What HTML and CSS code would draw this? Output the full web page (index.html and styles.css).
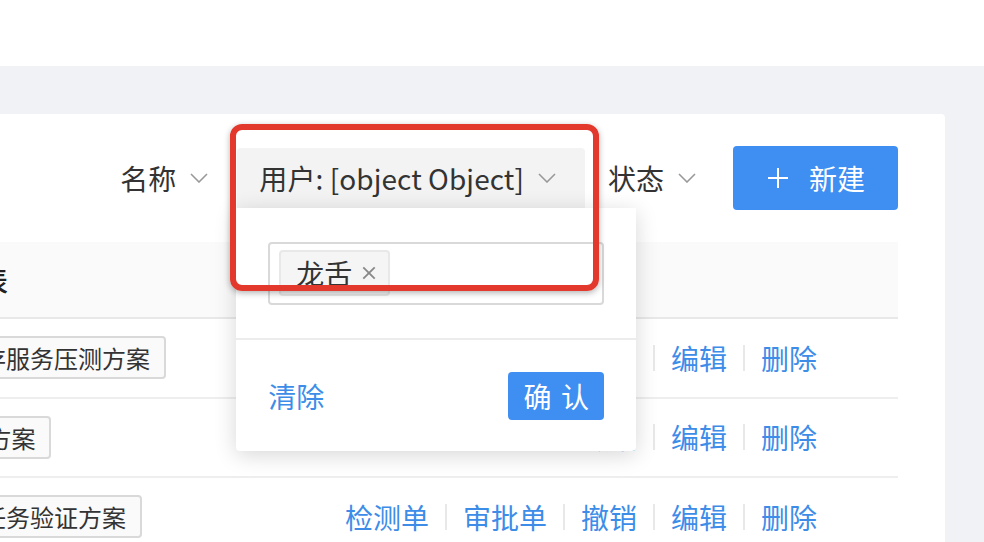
FILE: index.html
```html
<!DOCTYPE html>
<html lang="zh-CN">
<head>
    <meta charset="UTF-8">
    <meta name="viewport" content="width=device-width, initial-scale=1.0">
    <title>方案列表</title>
    <link rel="stylesheet" href="styles.css">
</head>
<body>

    <div class="topbar"></div>

    <div class="main">
        <div class="card">

            <div class="filters">
                <div class="filter">
                    名称
                    <svg class="chevron" viewBox="0 0 18 10"><polyline points="1,1 9,9 17,1"/></svg>
                </div>
                <div class="filter filter-active">
                    <span class="filter-label">用户: [object Object]</span>
                    <svg class="chevron" viewBox="0 0 18 10"><polyline points="1,1 9,9 17,1"/></svg>

                    <!-- dropdown of the user filter -->
                    <div class="dropdown">
                        <div class="dropdown-body">
                            <div class="select">
                                <span class="select-tag">
                                    龙舌
                                    <svg class="tag-close" viewBox="0 0 14 14"><line x1="2" y1="2" x2="12" y2="12"/><line x1="12" y1="2" x2="2" y2="12"/></svg>
                                </span>
                            </div>
                        </div>
                        <div class="dropdown-footer">
                            <a class="link" href="#">清除</a>
                            <button class="btn btn-small"><span class="spaced">确认</span></button>
                        </div>
                    </div>

                    <!-- annotation frame -->
                    <div class="highlight"></div>
                </div>
                <div class="filter">
                    状态
                    <svg class="chevron" viewBox="0 0 18 10"><polyline points="1,1 9,9 17,1"/></svg>
                </div>
                <button class="btn btn-large">
                    <svg class="plus" viewBox="0 0 22 22"><line x1="11" y1="1" x2="11" y2="21"/><line x1="1" y1="11" x2="21" y2="11"/></svg>
                    新建
                </button>
            </div>

            <div class="table">
                <div class="table-head">
                    <span class="head-title">方案表</span>
                </div>

                <div class="row">
                    <div class="col-name"><span class="tag">缓存服务压测方案</span></div>
                    <div class="actions">
                        <a href="#">撤销</a><i class="sep"></i>
                        <a href="#">编辑</a><i class="sep"></i>
                        <a href="#">删除</a>
                    </div>
                </div>

                <div class="row">
                    <div class="col-name"><span class="tag">新&nbsp;方案</span></div>
                    <div class="actions">
                        <a href="#">撤销</a><i class="sep"></i>
                        <a href="#">编辑</a><i class="sep"></i>
                        <a href="#">删除</a>
                    </div>
                </div>

                <div class="row">
                    <div class="col-name"><span class="tag">新任务验证方案</span></div>
                    <div class="actions">
                        <a href="#">检测单</a><i class="sep"></i>
                        <a href="#">审批单</a><i class="sep"></i>
                        <a href="#">撤销</a><i class="sep"></i>
                        <a href="#">编辑</a><i class="sep"></i>
                        <a href="#">删除</a>
                    </div>
                </div>
            </div>

        </div>
    </div>

</body>
</html>
```

FILE: styles.css
```css
body {
    margin: 0;
    height: 542px;
    overflow: hidden;
    font-family: "Noto Sans CJK SC", "Noto Sans", sans-serif;
    color: #333;
    background-color: #fff;
}
.topbar {
    height: 66px;
    background-color: #fff;
}
.main {
    height: 428px;
    padding: 48px 39px 0 0;
    background-color: #f0f2f5;
}
.card {
    height: 100%;
    margin-left: -138px;
    padding: 32px 47px 0 48px;
    background-color: #fff;
    border-radius: 4px 4px 0 0;
}

/* filter bar */
.filters {
    display: flex;
    justify-content: flex-end;
    align-items: center;
    height: 64px;
}
.filter {
    position: relative;
    display: flex;
    align-items: center;
    height: 60px;
    padding: 0 29px 0 23px;
    font-size: 28px;
    line-height: 60px;
    color: #333;
    white-space: nowrap;
}
.filter-active {
    padding-left: 22px;
    background-color: #f3f3f3;
    border-radius: 4px 4px 0 0;
}
.filter-label {
    letter-spacing: 0.08px;
}
.chevron {
    width: 18px;
    height: 10px;
    margin-left: 14px;
    fill: none;
    stroke: #999;
    stroke-width: 1.6;
}
.btn {
    display: flex;
    align-items: center;
    justify-content: center;
    border: none;
    border-radius: 4px;
    background-color: #3f8ef2;
    color: #fff;
    font-family: inherit;
    font-size: 28px;
    cursor: pointer;
}
.btn-large {
    height: 64px;
    margin-left: 8px;
    padding: 0 33px 0 34px;
    gap: 20px;
}
.btn-small {
    width: 96px;
    height: 48px;
    padding: 0;
}
.spaced {
    letter-spacing: 0.34em;
    margin-right: -0.34em;
}
.plus {
    width: 22px;
    height: 22px;
    stroke: #fff;
    stroke-width: 2;
}

/* dropdown */
.dropdown {
    position: absolute;
    top: 60px;
    left: -1px;
    z-index: 10;
    width: 400px;
    background-color: #fff;
    border-radius: 0 0 4px 4px;
    box-shadow: 0 4px 22px rgba(0, 0, 0, 0.16);
    line-height: normal;
}
.dropdown-body {
    padding: 34px 32px 33px;
    border-bottom: 2px solid #ececec;
}
.select {
    box-sizing: border-box;
    height: 63px;
    padding: 6px 9px;
    border: 2px solid #d9d9d9;
    border-radius: 4px;
}
.select-tag {
    box-sizing: border-box;
    display: inline-flex;
    align-items: center;
    height: 46px;
    padding: 0 11px 0 15px;
    gap: 9px;
    background-color: #f5f5f5;
    border: 2px solid #e8e8e8;
    border-radius: 4px;
    font-size: 28px;
    color: #333;
}
.tag-close {
    width: 16px;
    height: 16px;
    stroke: #888;
    stroke-width: 1.6;
}
.dropdown-footer {
    display: flex;
    justify-content: space-between;
    align-items: center;
    padding: 32px 32px 31px;
}
.link {
    font-size: 28px;
    color: #3d8de8;
    text-decoration: none;
}
.highlight {
    position: absolute;
    top: -24px;
    left: -7px;
    z-index: 20;
    box-sizing: border-box;
    width: 369px;
    height: 167px;
    border: 6px solid #e3392c;
    border-radius: 12px;
    box-shadow: 0 2px 6px rgba(0, 0, 0, 0.3);
    pointer-events: none;
}

/* table */
.table {
    margin-top: 32px;
}
.table-head {
    display: flex;
    align-items: center;
    height: 75px;
    padding: 0 32px;
    background-color: #fafafa;
    border-bottom: 2px solid #e8e8e8;
    font-size: 28px;
    font-weight: 500;
    color: #222;
}
.head-title {
    margin-left: -18px;
}
.row {
    display: flex;
    align-items: center;
    height: 77.5px;
    padding-left: 32px;
    border-bottom: 2px solid #eee;
}
.col-name {
    flex: 1;
}
.tag {
    display: inline-block;
    padding: 0 14px;
    font-size: 24px;
    line-height: 39px;
    color: #333;
    background-color: #fafafa;
    border: 2px solid #d9d9d9;
    border-radius: 4px;
    white-space: nowrap;
}
.actions {
    display: flex;
    align-items: center;
    padding-right: 81px;
    font-size: 28px;
    line-height: 40px;
    white-space: nowrap;
}
.actions a {
    color: #3d8de8;
    text-decoration: none;
}
.sep {
    display: block;
    width: 2px;
    height: 26px;
    margin: 0 16px;
    background-color: #e8e8e8;
}
```
